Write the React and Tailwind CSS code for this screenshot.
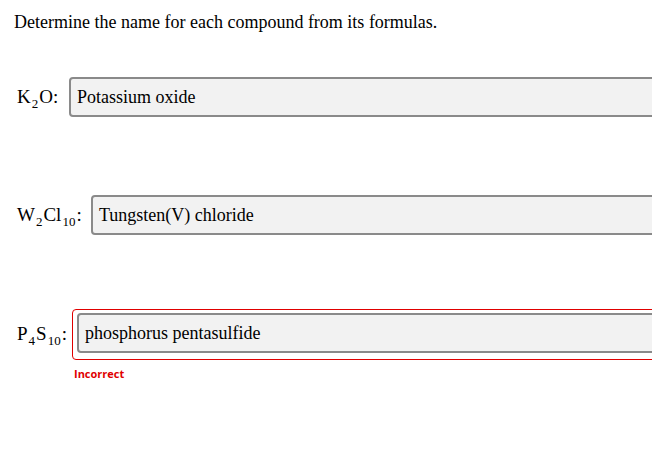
const serif = { fontFamily: '"Liberation Serif", "Times New Roman", serif' };

const Field = ({ value }) => (
  <div className="w-[720px] h-[40px] shrink-0 border-2 border-[#8a8a8a] rounded-[4px] bg-[#f2f2f2] flex items-center pl-[6px] text-[18px] text-black">
    {value}
  </div>
);

const Sub = ({ children }) => (
  <sub className="text-[13px] mx-[1px] bottom-[-5px]">{children}</sub>
);

export default function App() {
  return (
    <div className="w-[652px] h-[469px] overflow-hidden bg-white" style={serif}>
      <p className="pl-[14px] pt-[11px] text-[18px] text-black leading-[22px]">
        Determine the name for each compound from its formulas.
      </p>

      {/* K2O */}
      <div className="flex items-center pl-[17px] mt-[44px]">
        <span className="w-[52px] shrink-0 text-[19px] text-black whitespace-nowrap">
          K<Sub>2</Sub>O:
        </span>
        <Field value="Potassium oxide" />
      </div>

      {/* W2Cl10 */}
      <div className="flex items-center pl-[17px] mt-[78px]">
        <span className="w-[74px] shrink-0 text-[19px] text-black whitespace-nowrap">
          W<Sub>2</Sub>Cl<Sub>10</Sub>:
        </span>
        <Field value="Tungsten(V) chloride" />
      </div>

      {/* P4S10 */}
      <div className="flex items-center pl-[17px] mt-[74px]">
        <span className="w-[55px] shrink-0 text-[19px] text-black whitespace-nowrap">
          P<Sub>4</Sub>S<Sub>10</Sub>:
        </span>
        <div className="border border-[#e00000] rounded-[4px] pt-[3px] pb-[6px] pl-[4px]">
          <Field value="phosphorus pentasulfide" />
        </div>
      </div>
      <p
        className="pl-[74px] mt-[6px] text-[11px] font-bold text-[#e00000]"
        style={{ fontFamily: '"Open Sans", sans-serif' }}
      >
        Incorrect
      </p>
    </div>
  );
}
